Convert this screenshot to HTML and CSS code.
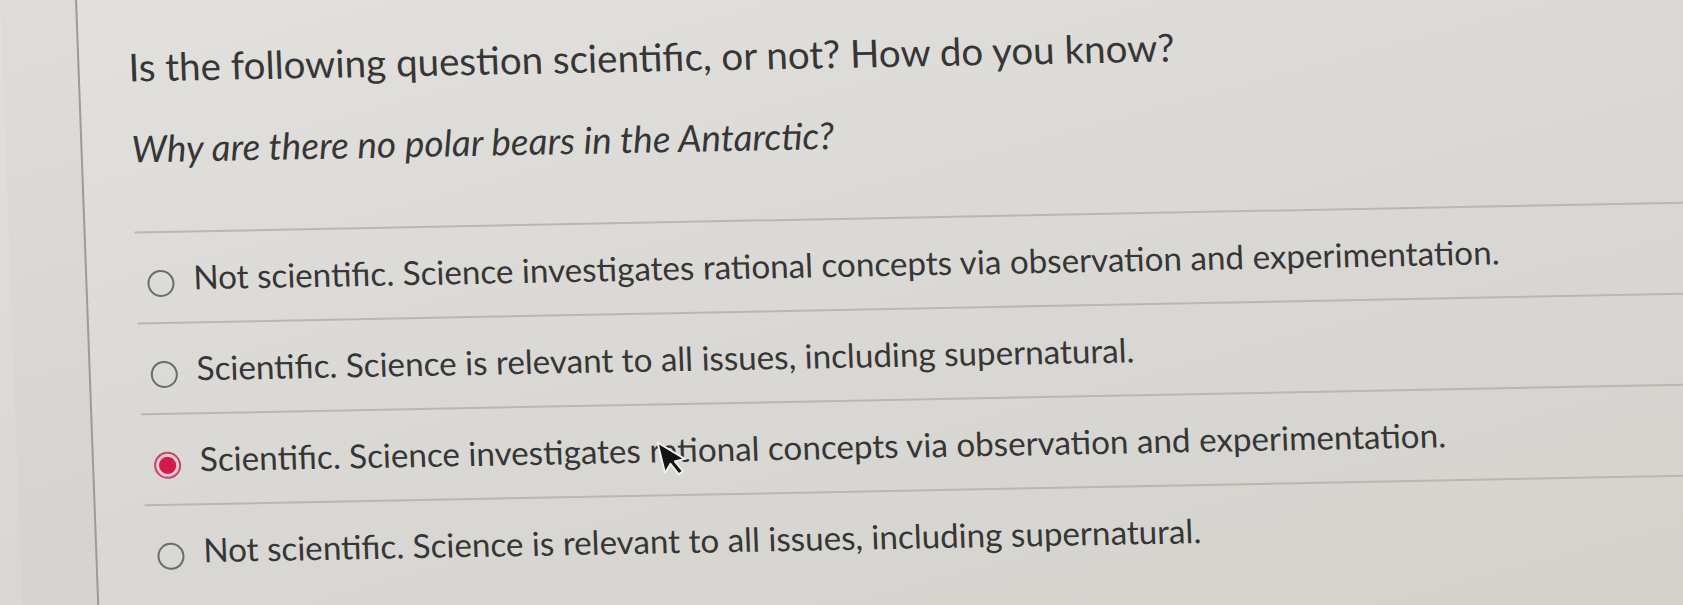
FILE: index.html
```html
<!DOCTYPE html>
<html lang="en">
<head>
    <meta charset="UTF-8">
    <meta name="viewport" content="width=device-width, initial-scale=1.0">
    <title>Quiz question</title>
    <link rel="stylesheet" href="styles.css">
</head>
<body>
    <div class="page">
        <div class="sidebar"></div>
        <div class="content">
            <div class="question">
                <p class="prompt">Is the following question scientific, or not? How do you know?</p>
                <p class="prompt-sub">Why are there no polar bears in the Antarctic?</p>
            </div>

            <div class="answers">
                <label class="answer">
                    <span class="radio"></span>
                    <span class="answer-text">Not scientific. Science investigates rational concepts via observation and experimentation.</span>
                </label>
                <label class="answer">
                    <span class="radio"></span>
                    <span class="answer-text">Scientific. Science is relevant to all issues, including supernatural.</span>
                </label>
                <label class="answer">
                    <span class="radio checked"></span>
                    <span class="answer-text">Scientific. Science investigates rational concepts via observation and experimentation.</span>
                </label>
                <label class="answer">
                    <span class="radio"></span>
                    <span class="answer-text">Not scientific. Science is relevant to all issues, including supernatural.</span>
                </label>
            </div>
        </div>
    </div>

    <!-- mouse pointer -->
    <svg class="pointer" width="30" height="44" viewBox="0 0 22 32">
        <path d="M2 2 L2 25 L7.5 19.5 L11.5 28.5 L15 27 L11 18.5 L18.5 18.5 Z" fill="#141414" stroke="#f0f0ee" stroke-width="1.4" stroke-linejoin="round"/>
    </svg>
</body>
</html>
```

FILE: styles.css
```css
body {
    margin: 0;
    height: 605px;
    overflow: hidden;
    position: relative;
    font-family: Lato, "Open Sans", sans-serif;
    color: #363637;
    background: linear-gradient(165deg, #e2e1de 0%, #dad9d5 45%, #d4d2cd 100%);
}
.page {
    display: flex;
    width: 1800px;
    min-height: 700px;
    margin-top: -20px;
    transform: rotate(-1.1deg) skewX(1deg);
    transform-origin: 0 20px;
}
.sidebar {
    width: 75px;
    flex-shrink: 0;
    border-right: 2px solid #9d9b97;
    background-color: rgba(0, 0, 0, 0.015);
}
.content {
    flex: 1;
    padding-left: 49px;
    padding-top: 20px;
}
.question {
    padding-top: 46px;
    height: 188px;
}
.prompt {
    margin: 0;
    font-size: 38.5px;
    line-height: 1.2;
}
.prompt-sub {
    margin: 37px 0 0;
    font-size: 37px;
    line-height: 1.2;
    font-style: italic;
}
.answer {
    display: flex;
    align-items: center;
    height: 89px;
    border-top: 2px solid #b9b7b2;
    padding-left: 11px;
}
.radio {
    width: 23px;
    height: 23px;
    border: 2.5px solid #6c6c6c;
    border-radius: 50%;
    margin-top: 12px;
    margin-right: 19px;
    flex-shrink: 0;
}
.radio.checked {
    border-color: #c24669;
    background: radial-gradient(circle, #d21a4f 0 8px, #f4c6d3 9px);
}
.answer-text {
    font-size: 33.2px;
    line-height: 1.2;
}
.pointer {
    position: absolute;
    left: 659px;
    top: 436px;
    transform: rotate(-14deg);
}
```
